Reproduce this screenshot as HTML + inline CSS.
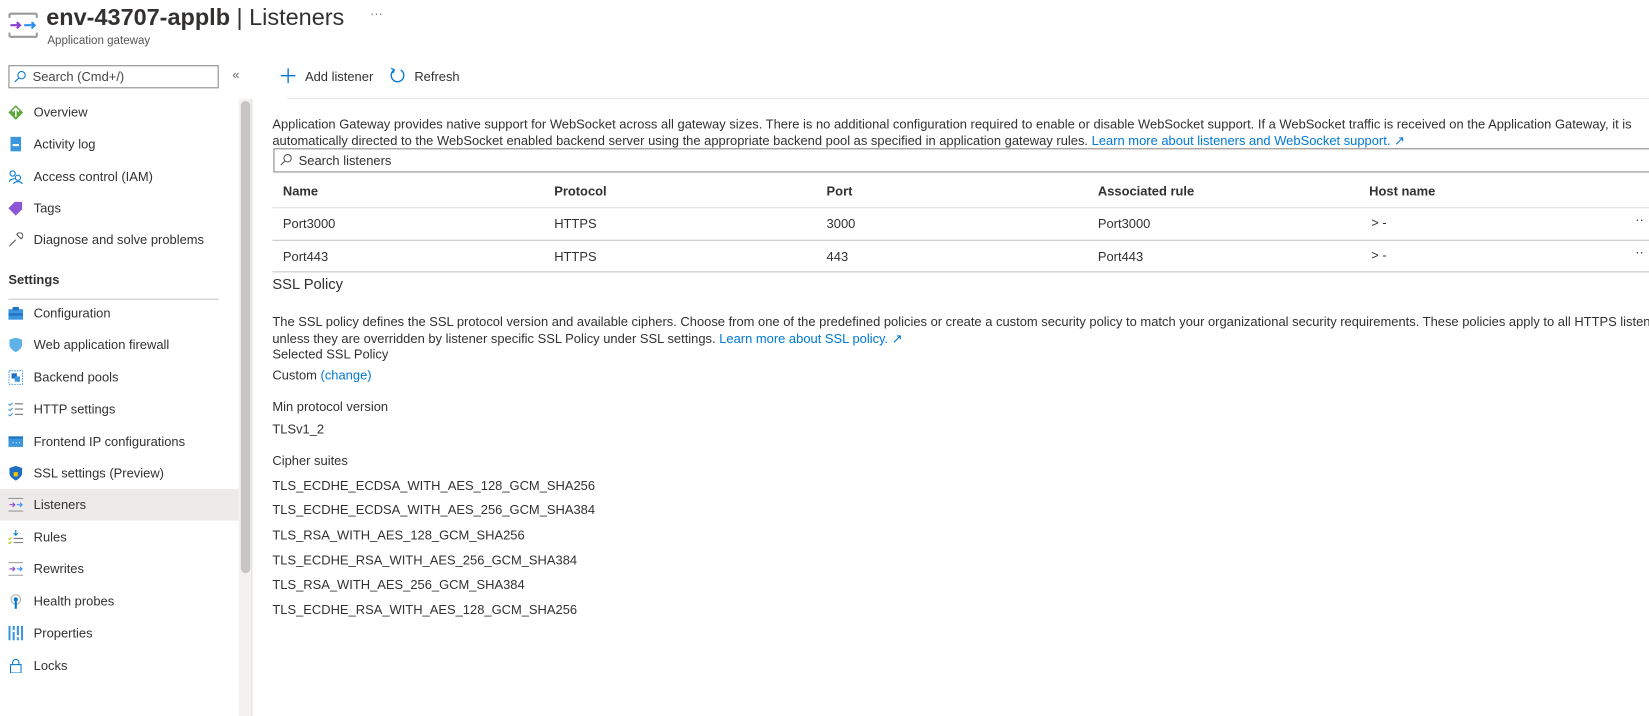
<!DOCTYPE html>
<html><head><meta charset="utf-8"><style>
*{margin:0;padding:0;box-sizing:border-box}
html,body{width:1649px;height:681px;overflow:hidden;background:#fff}
#w{position:absolute;left:0;top:0;width:1568px;height:648px;transform:scale(1.0516);transform-origin:0 0;font-family:"Liberation Sans",sans-serif;color:#323130;font-size:12.3px}
.a{position:absolute;white-space:nowrap}
.link{color:#0078d4}
.nav{position:absolute;left:0;width:227px;height:30px}
.nav .ic{position:absolute;left:8px;top:8px;width:14px;height:14px}
.nav .t{position:absolute;left:32px;top:8px}
.sel{background:#edebe9}
.hl{position:absolute;height:1px;background:#e1dfdd}
</style></head><body><div id="w">
<svg class="a" style="left:8px;top:11px" width="28" height="26" viewBox="0 0 28 26">
<path d="M1 2h26M1 24h26" stroke="#999" stroke-width="2"/><path d="M1 2v4M27 2v4M1 24v-4M27 24v-4" stroke="#999" stroke-width="2"/>
<path d="M2 13h9M8 10l3 3-3 3" stroke="#8a3ed8" stroke-width="2" fill="none"/>
<path d="M15 13h10M22 10l3 3-3 3" stroke="#2f8ff5" stroke-width="2" fill="none"/></svg>
<div class="a" style="left:44px;top:4px;font-size:22.3px"><b style="font-weight:600">env-43707-applb</b> | Listeners</div>
<div class="a" style="left:352px;top:6px;font-size:12px;color:#777">···</div>
<div class="a" style="left:45px;top:33px;font-size:11px;color:#555">Application gateway</div>
<div class="a" style="left:8px;top:62px;width:200px;height:22px;border:1px solid #8a8886"></div>
<svg class="a" style="left:13px;top:67px" width="12" height="12"><circle cx="7.5" cy="4.5" r="3.5" fill="none" stroke="#0078d4"/><path d="M5 7L1 11" stroke="#0078d4"/></svg>
<div class="a" style="left:31px;top:66px;color:#444">Search (Cmd+/)</div>
<div class="a" style="left:221px;top:64px;color:#666">«</div>
<div class="a" style="left:227px;top:94px;width:13px;height:587px;background:#f3f2f1;border-right:1px solid #e1dfdd"></div>
<div class="a" style="left:229px;top:96px;width:9px;height:449px;background:#c8c6c4;border-radius:5px"></div>
<div class="nav" style="top:92px"><svg class="ic" viewBox="0 0 14 14"><path d="M7 0L14 7 7 14 0 7z" fill="#5ea83e"/><path d="M7 3v8M4 6l3-3 3 3" stroke="#fff" stroke-width="1.5" fill="none"/></svg><span class="t">Overview</span></div>
<div class="nav" style="top:122px"><svg class="ic" viewBox="0 0 14 14"><rect x="2" y="0" width="10" height="14" fill="#3a96dd"/><rect x="4" y="7" width="6" height="2" fill="#fff"/></svg><span class="t">Activity log</span></div>
<div class="nav" style="top:153px"><svg class="ic" viewBox="0 0 14 14"><circle cx="4" cy="4" r="2.5" fill="none" stroke="#0078d4"/><circle cx="9" cy="8" r="2.5" fill="none" stroke="#0078d4"/><path d="M1 12c0-3 5-3 5-3M5 14c0-3 8-3 8 0" fill="none" stroke="#0078d4"/></svg><span class="t">Access control (IAM)</span></div>
<div class="nav" style="top:183px"><svg class="ic" viewBox="0 0 14 14"><path d="M6 1h7v7l-6 6-7-7z" fill="#8c56d6"/></svg><span class="t">Tags</span></div>
<div class="nav" style="top:213px"><svg class="ic" viewBox="0 0 14 14"><path d="M1 13l6-6M8 2a3 3 0 1 1 4 4l-2-2z" stroke="#555" fill="none"/></svg><span class="t">Diagnose and solve problems</span></div>
<div class="a" style="left:8px;top:259px;font-weight:bold">Settings</div>
<div class="hl" style="left:8px;top:284px;width:200px;background:#c8c6c4"></div>
<div class="nav" style="top:283px"><svg class="ic" viewBox="0 0 14 14"><rect x="0" y="3" width="14" height="10" fill="#3a96dd"/><rect x="4" y="1" width="6" height="3" fill="#1e6fc1"/><rect x="0" y="7" width="14" height="2" fill="#1e6fc1"/></svg><span class="t">Configuration</span></div>
<div class="nav" style="top:313px"><svg class="ic" viewBox="0 0 14 14"><path d="M7 0l6 2v5c0 4-6 7-6 7S1 11 1 7V2z" fill="#5fb2e8"/></svg><span class="t">Web application firewall</span></div>
<div class="nav" style="top:344px"><svg class="ic" viewBox="0 0 14 14"><rect x=".5" y=".5" width="13" height="13" fill="none" stroke="#3a96dd" stroke-dasharray="1.5 1"/><rect x="3" y="3" width="5" height="5" fill="#1e6fc1"/><rect x="6" y="6" width="5" height="5" fill="#3a96dd"/></svg><span class="t">Backend pools</span></div>
<div class="nav" style="top:374px"><svg class="ic" viewBox="0 0 14 14"><path d="M0 2l1.5 1.5L4 1M0 7l1.5 1.5L4 6M0 12l1.5 1.5L4 11" stroke="#3a96dd" fill="none"/><path d="M6 2h8M6 7h8M6 12h8" stroke="#777"/></svg><span class="t">HTTP settings</span></div>
<div class="nav" style="top:405px"><svg class="ic" viewBox="0 0 14 14"><rect x="0" y="2" width="14" height="10" fill="#3a96dd"/><rect x="0" y="2" width="14" height="2" fill="#1e6fc1"/><path d="M4 8h1M7 8h1M10 8h1" stroke="#fff"/></svg><span class="t">Frontend IP configurations</span></div>
<div class="nav" style="top:435px"><svg class="ic" viewBox="0 0 14 14"><path d="M7 0l6 2v5c0 4-6 7-6 7S1 11 1 7V2z" fill="#1e6fc1"/><rect x="5" y="6" width="4" height="4" fill="#f8c500"/></svg><span class="t">SSL settings (Preview)</span></div>
<div class="nav sel" style="top:465px"><svg class="ic" viewBox="0 0 14 14"><path d="M0 1h14M0 13h14" stroke="#999"/><path d="M1 7h5M4 5l2 2-2 2" stroke="#8a3ed8" fill="none"/><path d="M8 7h5M11 5l2 2-2 2" stroke="#2f8ff5" fill="none"/></svg><span class="t">Listeners</span></div>
<div class="nav" style="top:496px"><svg class="ic" viewBox="0 0 14 14"><path d="M7 0v5M5 3l2 2 2-2" stroke="#0078d4" fill="none"/><path d="M0 8l1 1 2-2M0 12l1 1 2-2" stroke="#a4c400" fill="none"/><path d="M5 8h9M5 12h9" stroke="#777"/></svg><span class="t">Rules</span></div>
<div class="nav" style="top:526px"><svg class="ic" viewBox="0 0 14 14"><path d="M0 1h14M0 13h14" stroke="#999"/><path d="M1 7h5M4 5l2 2-2 2" stroke="#8a3ed8" fill="none"/><path d="M8 7h5M11 5l2 2-2 2" stroke="#2f8ff5" fill="none"/></svg><span class="t">Rewrites</span></div>
<div class="nav" style="top:557px"><svg class="ic" viewBox="0 0 14 14"><circle cx="7" cy="5" r="4.5" fill="none" stroke="#aaa"/><circle cx="7" cy="5" r="2" fill="#0078d4"/><rect x="6" y="6" width="2" height="8" fill="#0078d4"/></svg><span class="t">Health probes</span></div>
<div class="nav" style="top:587px"><svg class="ic" viewBox="0 0 14 14"><path d="M1 0v14M5 0v14M9 0v14M13 0v14" stroke="#3a96dd" stroke-width="2"/><path d="M5 4v2M9 9v2" stroke="#fff" stroke-width="2"/></svg><span class="t">Properties</span></div>
<div class="nav" style="top:618px"><svg class="ic" viewBox="0 0 14 14"><path d="M4 6V4a3 3 0 0 1 6 0v2" fill="none" stroke="#0078d4"/><rect x="2" y="6" width="10" height="8" fill="none" stroke="#0078d4"/></svg><span class="t">Locks</span></div>
<svg class="a" style="left:266px;top:64px" width="16" height="16"><path d="M8 1v14M1 8h14" stroke="#0078d4" stroke-width="1.3"/></svg>
<div class="a" style="left:290px;top:66px">Add listener</div>
<svg class="a" style="left:370px;top:64px" width="16" height="16"><path d="M11 2.5A6 6 0 1 1 5 2.5" fill="none" stroke="#0078d4" stroke-width="1.3"/><path d="M2 1l3 1.5-1.5 3" fill="none" stroke="#0078d4" stroke-width="1.2"/></svg>
<div class="a" style="left:394px;top:66px">Refresh</div>
<div class="hl" style="left:273px;top:93px;width:1376px"></div>
<div class="a" style="left:259px;top:110px;line-height:16px">Application Gateway provides native support for WebSocket across all gateway sizes. There is no additional configuration required to enable or disable WebSocket support. If a WebSocket traffic is received on the Application Gateway, it is<br>automatically directed to the WebSocket enabled backend server using the appropriate backend pool as specified in application gateway rules. <span class="link">Learn more about listeners and WebSocket support. ↗</span></div>
<div class="a" style="left:260px;top:141px;width:1400px;height:23px;border:1px solid #8a8886"></div>
<svg class="a" style="left:266px;top:146px" width="12" height="12"><circle cx="7.5" cy="4.5" r="3.5" fill="none" stroke="#555"/><path d="M5 7L1 11" stroke="#555"/></svg>
<div class="a" style="left:284px;top:146px">Search listeners</div>
<div class="a" style="left:269px;top:175px;font-weight:bold">Name</div>
<div class="a" style="left:527px;top:175px;font-weight:bold">Protocol</div>
<div class="a" style="left:786px;top:175px;font-weight:bold">Port</div>
<div class="a" style="left:1044px;top:175px;font-weight:bold">Associated rule</div>
<div class="a" style="left:1302px;top:175px;font-weight:bold">Host name</div>
<div class="hl" style="left:259px;top:197px;width:1390px"></div>
<div class="a" style="left:269px;top:206px">Port3000</div><div class="a" style="left:527px;top:206px">HTTPS</div><div class="a" style="left:786px;top:206px">3000</div><div class="a" style="left:1044px;top:206px">Port3000</div><div class="a" style="left:1304px;top:205px">&gt; -</div><div class="a" style="left:1555px;top:202px">··</div>
<div class="hl" style="left:259px;top:228px;width:1390px;background:#c8c6c4"></div>
<div class="a" style="left:269px;top:237px">Port443</div><div class="a" style="left:527px;top:237px">HTTPS</div><div class="a" style="left:786px;top:237px">443</div><div class="a" style="left:1044px;top:237px">Port443</div><div class="a" style="left:1304px;top:236px">&gt; -</div><div class="a" style="left:1555px;top:233px">··</div>
<div class="hl" style="left:259px;top:258px;width:1390px;background:#c8c6c4"></div>
<div class="a" style="left:259px;top:262px;font-size:14px">SSL Policy</div>
<div class="a" style="left:259px;top:298px;line-height:16px">The SSL policy defines the SSL protocol version and available ciphers. Choose from one of the predefined policies or create a custom security policy to match your organizational security requirements. These policies apply to all HTTPS listener<br>unless they are overridden by listener specific SSL Policy under SSL settings. <span class="link">Learn more about SSL policy. ↗</span></div>
<div class="a" style="left:259px;top:330px">Selected SSL Policy</div>
<div class="a" style="left:259px;top:350px">Custom <span class="link">(change)</span></div>
<div class="a" style="left:259px;top:380px">Min protocol version</div>
<div class="a" style="left:259px;top:401px">TLSv1_2</div>
<div class="a" style="left:259px;top:431px">Cipher suites</div>
<div class="a" style="left:259px;top:455px">TLS_ECDHE_ECDSA_WITH_AES_128_GCM_SHA256</div>
<div class="a" style="left:259px;top:478px">TLS_ECDHE_ECDSA_WITH_AES_256_GCM_SHA384</div>
<div class="a" style="left:259px;top:502px">TLS_RSA_WITH_AES_128_GCM_SHA256</div>
<div class="a" style="left:259px;top:526px">TLS_ECDHE_RSA_WITH_AES_256_GCM_SHA384</div>
<div class="a" style="left:259px;top:549px">TLS_RSA_WITH_AES_256_GCM_SHA384</div>
<div class="a" style="left:259px;top:573px">TLS_ECDHE_RSA_WITH_AES_128_GCM_SHA256</div>
</div></body></html>
